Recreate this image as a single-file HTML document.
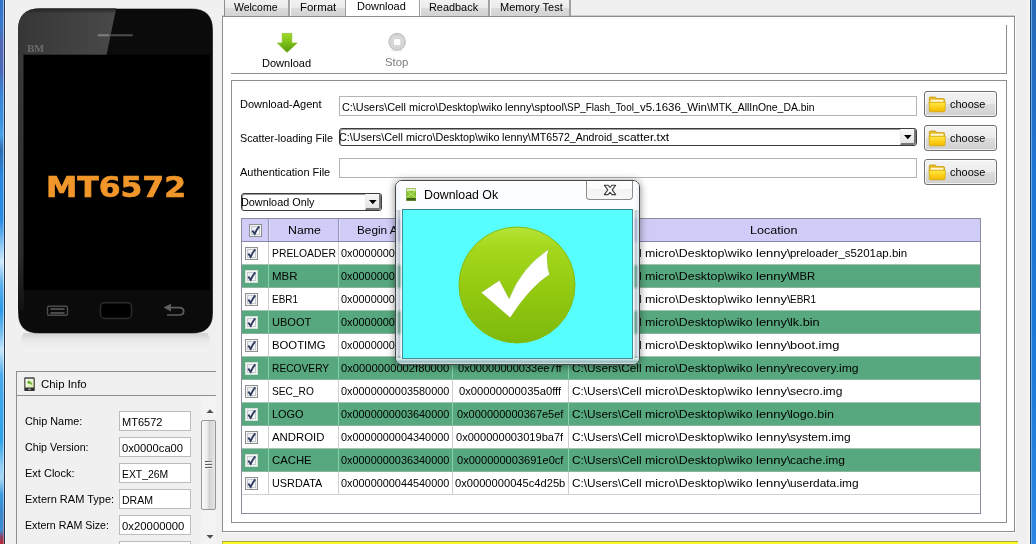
<!DOCTYPE html><html><head><meta charset="utf-8"><title>Smart Phone Flash Tool</title><style>
*{box-sizing:border-box;margin:0;padding:0}
html,body{width:1036px;height:544px;overflow:hidden;background:#f0f0f0}
body{position:relative;will-change:transform;font-family:"Liberation Sans",sans-serif;font-size:11px;color:#000}
.a{position:absolute}
.t{position:absolute;white-space:pre;line-height:1;transform-origin:0 0;display:block}
.bx{position:absolute;border:1px solid #8e8e8e;background:#fff}
.inp{position:absolute;border:1px solid #b4b4b4;background:#fff}
.btn{position:absolute;border:1px solid #707070;border-radius:3px;background:linear-gradient(#f4f4f4 0%,#ebebeb 48%,#dddddd 52%,#cfcfcf 100%);box-shadow:inset 0 0 0 1px rgba(255,255,255,.7)}
.tab{position:absolute;top:-2px;height:18px;border:1px solid #8e8e8e;border-right:2px solid #a2a2a2;border-left-color:#fafafa;border-bottom:none;background:linear-gradient(#f2f2f2 0%,#ebebeb 50%,#dcdcdc 55%,#d2d2d2 100%)}
.row{position:absolute;left:242px;width:738px;height:23px;background:#fff;border-bottom:1px solid #a4c4b4}
.row.l{border-bottom-color:#d2d2d2}
.row.g{background:#57a87e;border-bottom-color:#8ab49e}
.row i{position:absolute;top:0;width:1px;height:22px;background:#d0ccd0}
.row.g i{background:#86d0aa}
.cb.g{border-color:#cfe0d6}
.cb{position:absolute;width:13px;height:13px;border:1px solid #8e8f8f;background:linear-gradient(135deg,#dfe2e6 0%,#f4f5f7 50%,#ffffff 100%);box-shadow:inset 0 0 0 1px #f4f4f4, inset 0 0 0 2px #c4c8cf}
</style></head><body>
<div class="a" style="left:0;top:0;width:3px;height:544px;background:linear-gradient(#3274c8 0px,#3a78cc 25px,#5566b4 45px,#4a6ab8 70px,#3a84d8 95px,#3c90e0 120px,#4aa4e8 134px,#2e6cb0 150px,#2a86de 175px,#2a8ce2 220px,#8cc8f4 245px,#d0e8fa 262px,#58aeee 285px,#2a9ae6 310px,#7cc4f2 335px,#c8e6fa 350px,#4aaaec 375px,#2ea2e8 440px,#8ccdf4 465px,#a8d8f6 478px,#3a9ade 495px,#3a86c8 515px,#3a90d8 530px,#8a4060 537px,#c02838 544px)"></div>
<div class="a" style="left:3px;top:0;width:1px;height:544px;background:linear-gradient(#9cc0ee 0px,#a8b4e4 60px,#8cc4f2 140px,#7cc0f4 230px,#e4f2fc 262px,#8cccf6 300px,#dcf0fc 350px,#86ccf4 400px,#bfe2f8 470px,#7ab4e4 510px,#c86a78 544px)"></div><div class="a" style="left:4px;top:0;width:1px;height:544px;background:#23354f"></div><div class="a" style="left:5px;top:0;width:1px;height:544px;background:#fbfdff"></div>
<div class="a" style="left:1028px;top:0;width:2px;height:544px;background:linear-gradient(90deg,#f4f4f6,#f8fcff)"></div>
<div class="a" style="left:1030px;top:0;width:1px;height:544px;background:#1d3f6e"></div>
<div class="a" style="left:1031px;top:0;width:5px;height:544px;background:linear-gradient(#2768b4,#1e74d2 30%,#1c78d6 60%,#2a86e2)"></div><div class="a" style="left:1031px;top:0;width:1px;height:544px;background:#6aaef2"></div>
<svg class="a" style="left:0;top:0" width="222" height="370" viewBox="0 0 222 370">
<defs>
<linearGradient id="gl" x1="0" y1="0" x2="1" y2="0"><stop offset="0" stop-color="#363636"/><stop offset="1" stop-color="#494949"/></linearGradient>
<linearGradient id="gv" x1="0" y1="0" x2="0" y2="1"><stop offset="0" stop-color="#1c1c1c" stop-opacity=".9"/><stop offset=".12" stop-color="#1c1c1c" stop-opacity="0"/></linearGradient>
<linearGradient id="rim" x1="0" y1="0" x2="0" y2="1"><stop offset="0" stop-color="#3a3a3a"/><stop offset=".8" stop-color="#2c2c2c"/><stop offset="1" stop-color="#111"/></linearGradient>
<linearGradient id="sh" x1="0" y1="0" x2="0" y2="1"><stop offset="0" stop-color="#c8c8c8"/><stop offset=".35" stop-color="#e6e6e6"/><stop offset="1" stop-color="#f3f3f3"/></linearGradient>
<clipPath id="pc"><path d="M18 30 Q18 8.500 40 8.500 H191 Q213 8.500 213 30 V313 Q213 333.500 192 333.500 H39 Q18 333.500 18 313 Z"/></clipPath>
</defs>
<path d="M24 333 H207 Q213 340 205 352 H26 Q18 340 24 333Z" fill="url(#sh)" opacity=".8"/>
<path d="M18 30 Q18 8.500 40 8.500 H191 Q213 8.500 213 30 V313 Q213 333.500 192 333.500 H39 Q18 333.500 18 313 Z" fill="#0b0b0b" stroke="#fafafa" stroke-opacity=".35" stroke-width="1"/>
<g clip-path="url(#pc)">
<rect x="18" y="40" width="6" height="270" fill="url(#rim)"/>
<path d="M18 8 H116.300 L106.500 55 H18 Z" fill="url(#gl)"/>
<path d="M18 8 H116.300 L106.500 55 H18 Z" fill="url(#gv)"/>
<rect x="23.500" y="54.700" width="186.500" height="235.500" fill="#000"/>
</g>
<rect x="97.500" y="34.300" width="35.500" height="2" rx="1" fill="#4c4c4c"/>
<rect x="97.500" y="34.300" width="12" height="2" rx="1" fill="#808080"/>
<text x="27.300" y="52" font-family="Liberation Serif, serif" font-weight="700" font-size="10.5" fill="#6c6c6c">BM</text>
<g fill="none" stroke="#4c4c4c" stroke-width="1.400">
<rect x="47.500" y="306.300" width="20" height="9" rx="1.500"/>
<path d="M50.500 309 H64.500 M50.500 313 H64.500" stroke="#8a8a8a" stroke-width="1.100"/>
<rect x="100.500" y="302.800" width="31" height="15.700" rx="4" stroke="#2e2e2e" fill="#000"/>
<path d="M167 315 H179 Q183.700 315 183.700 311.300 Q183.700 307.600 179 307.600 H171" stroke="#5e5e5e" stroke-width="1.700"/>
</g>
<path d="M163.500 307.600 L171 303.800 V311.400 Z" fill="#5e5e5e"/>
</svg>
<span id="t0" class="t" style="left:45.60px;top:173.89px;font-size:28.5px;color:#f0962a;font-weight:bold;font-family:'DejaVu Sans','Liberation Sans',sans-serif;transform:scaleX(1.1013);-webkit-text-stroke:0.7px #f0962a;">MT6572</span>
<div class="a" style="left:16px;top:371px;width:200px;height:1px;background:#8e8e8e"></div>
<div class="a" style="left:16px;top:371px;width:1px;height:173px;background:#8e8e8e"></div>
<div class="a" style="left:16px;top:395px;width:200px;height:1px;background:#8e8e8e"></div>
<svg class="a" style="left:23.500px;top:376.500px" width="11" height="14.500" viewBox="0 0 11 14.500"><defs><linearGradient id="gs" x1="0" y1="0" x2="1" y2="1"><stop offset="0" stop-color="#ffffff"/><stop offset="1" stop-color="#d4eea0"/></linearGradient></defs><rect x=".4" y=".4" width="10.200" height="13.700" rx="1.200" fill="#303030" stroke="#4a4a4a" stroke-width=".5"/><rect x="1.400" y="1.700" width="8.200" height="8.800" fill="url(#gs)"/><path d="M3 5.200 L5.300 3 V4.400 Q8.300 4.500 8 8.600 Q7.300 6.300 5.300 6.200 V7.500Z" fill="#62a41c"/><rect x="4.300" y="11.700" width="2.400" height="1" rx=".4" fill="#e4e4e4"/></svg>
<span id="t1" class="t" style="left:40.60px;top:378.69px;font-size:11px;color:#000;font-weight:normal;font-family:'Liberation Sans',sans-serif;transform:scaleX(1.0379);">Chip Info</span>
<span id="t2" class="t" style="left:24.50px;top:415.99px;font-size:11px;color:#000;font-weight:normal;font-family:'Liberation Sans',sans-serif;transform:scaleX(0.9849);">Chip Name:</span>
<div class="inp" style="left:119px;top:411px;width:72px;height:20px;border-color:#bcbcbc"></div>
<span id="t3" class="t" style="left:121.50px;top:416.99px;font-size:11px;color:#000;font-weight:normal;font-family:'Liberation Sans',sans-serif;transform:scaleX(1.0035);">MT6572</span>
<span id="t4" class="t" style="left:24.50px;top:441.99px;font-size:11px;color:#000;font-weight:normal;font-family:'Liberation Sans',sans-serif;transform:scaleX(0.9719);">Chip Version:</span>
<div class="inp" style="left:119px;top:437px;width:72px;height:20px;border-color:#bcbcbc"></div>
<span id="t5" class="t" style="left:121.50px;top:442.99px;font-size:11px;color:#000;font-weight:normal;font-family:'Liberation Sans',sans-serif;transform:scaleX(1.0191);">0x0000ca00</span>
<span id="t6" class="t" style="left:24.50px;top:467.99px;font-size:11px;color:#000;font-weight:normal;font-family:'Liberation Sans',sans-serif;transform:scaleX(0.9997);">Ext Clock:</span>
<div class="inp" style="left:119px;top:463px;width:72px;height:20px;border-color:#bcbcbc"></div>
<span id="t7" class="t" style="left:121.50px;top:468.99px;font-size:11px;color:#000;font-weight:normal;font-family:'Liberation Sans',sans-serif;transform:scaleX(0.9423);">EXT_26M</span>
<span id="t8" class="t" style="left:24.50px;top:493.99px;font-size:11px;color:#000;font-weight:normal;font-family:'Liberation Sans',sans-serif;transform:scaleX(1.0004);">Extern RAM Type:</span>
<div class="inp" style="left:119px;top:489px;width:72px;height:20px;border-color:#bcbcbc"></div>
<span id="t9" class="t" style="left:121.50px;top:494.99px;font-size:11px;color:#000;font-weight:normal;font-family:'Liberation Sans',sans-serif;transform:scaleX(0.9571);">DRAM</span>
<span id="t10" class="t" style="left:24.50px;top:519.99px;font-size:11px;color:#000;font-weight:normal;font-family:'Liberation Sans',sans-serif;transform:scaleX(0.9676);">Extern RAM Size:</span>
<div class="inp" style="left:119px;top:515px;width:72px;height:20px;border-color:#bcbcbc"></div>
<span id="t11" class="t" style="left:121.50px;top:520.99px;font-size:11px;color:#000;font-weight:normal;font-family:'Liberation Sans',sans-serif;transform:scaleX(1.0303);">0x20000000</span>
<div class="inp" style="left:119px;top:541px;width:72px;height:20px;border-color:#bcbcbc"></div>
<div class="a" style="left:201px;top:396px;width:15px;height:148px;background:#f3f3f3"></div>
<div class="a" style="left:201px;top:420px;width:15px;height:90px;border:1px solid #979797;border-radius:2px;background:linear-gradient(90deg,#fafafa 0%,#ececec 40%,#d2d2d2 55%,#dcdcdc 80%,#e6e6e6 100%)"></div>
<div class="a" style="left:205px;top:461px;width:7px;height:1px;background:linear-gradient(90deg,#3c3c3c,#8a8a8a);box-shadow:0 3px 0 #5c5c5c,0 6px 0 #5c5c5c,0 1px 0 #f6f6f6,0 4px 0 #f6f6f6,0 7px 0 #f6f6f6"></div>
<svg class="a" style="left:204.500px;top:408px" width="10" height="6"><path d="M1.500 5 L5 1.300 L8.500 5Z" fill="#505050"/></svg>
<svg class="a" style="left:204.500px;top:534px" width="10" height="6"><path d="M1.500 1 L5 4.700 L8.500 1Z" fill="#505050"/></svg>
<div class="a" style="left:222px;top:15px;width:793px;height:1px;background:#cdcdcd"></div><div class="bx" style="left:222px;top:16px;width:793px;height:516px;box-shadow:1px 1px 0 #fcfcfc"></div>
<div class="tab" style="left:224px;width:66px;border-left-color:#8e8e8e"></div>
<span id="t12" class="t" style="left:233.80px;top:1.59px;font-size:11px;color:#000;font-weight:normal;font-family:'Liberation Sans',sans-serif;transform:scaleX(0.9528);">Welcome</span>
<div class="tab" style="left:290px;width:55px;border-right:none"></div>
<span id="t13" class="t" style="left:299.50px;top:1.59px;font-size:11px;color:#000;font-weight:normal;font-family:'Liberation Sans',sans-serif;transform:scaleX(1.0418);">Format</span>
<div class="tab" style="left:345px;width:75px;top:-4px;height:20px;background:#fff;border-left-color:#9c9c9c;border-right:1px solid #9c9c9c"></div>
<span id="t14" class="t" style="left:357.40px;top:0.59px;font-size:11px;color:#000;font-weight:normal;font-family:'Liberation Sans',sans-serif;transform:scaleX(0.9975);">Download</span>
<div class="tab" style="left:420px;width:70px"></div>
<span id="t15" class="t" style="left:428.60px;top:1.59px;font-size:11px;color:#000;font-weight:normal;font-family:'Liberation Sans',sans-serif;transform:scaleX(0.9910);">Readback</span>
<div class="tab" style="left:490px;width:81px"></div>
<span id="t16" class="t" style="left:499.60px;top:1.59px;font-size:11px;color:#000;font-weight:normal;font-family:'Liberation Sans',sans-serif;transform:scaleX(0.9990);">Memory Test</span>
<div class="bx" style="left:231px;top:25px;width:776px;height:49px;border-color:#8e8e8e;border-left:none;border-top:none"></div>
<div class="bx" style="left:231px;top:80px;width:776px;height:443px"></div>
<svg class="a" style="left:274px;top:30px" width="26" height="25" viewBox="0 0 26 25"><defs><linearGradient id="ga" x1="0" y1="0" x2="0" y2="1"><stop offset="0" stop-color="#9cd828"/><stop offset=".5" stop-color="#7cc018"/><stop offset="1" stop-color="#56960e"/></linearGradient></defs><path d="M8.200 3.400 H17.800 V13 H23.200 L13 22.400 L3.400 13 H8.200Z" fill="url(#ga)" stroke="#86bc24" stroke-width=".7"/></svg>
<span id="t17" class="t" style="left:261.50px;top:58.09px;font-size:11px;color:#000;font-weight:normal;font-family:'Liberation Sans',sans-serif;transform:scaleX(1.0036);">Download</span>
<svg class="a" style="left:386px;top:31px" width="22" height="22" viewBox="0 0 22 22"><ellipse cx="11.1" cy="19.6" rx="6" ry="1" fill="#e9e9e9"/><circle cx="11.1" cy="10.7" r="8.200" fill="#dcdcdc" stroke="#c0c0c0" stroke-width="1.300"/><circle cx="11.1" cy="10.7" r="6.300" fill="none" stroke="#cfcfcf" stroke-width="1"/><rect x="7.400" y="7.700" width="7.400" height="6.900" rx=".8" fill="#fdfdfd" stroke="#c8c8c8" stroke-width=".7"/></svg>
<span id="t18" class="t" style="left:384.90px;top:57.09px;font-size:11px;color:#7c7c7c;font-weight:normal;font-family:'Liberation Sans',sans-serif;transform:scaleX(1.0291);">Stop</span>
<span id="t19" class="t" style="left:239.70px;top:98.89px;font-size:11px;color:#000;font-weight:normal;font-family:'Liberation Sans',sans-serif;transform:scaleX(1.0019);">Download-Agent</span>
<span id="t20" class="t" style="left:239.80px;top:132.79px;font-size:11px;color:#000;font-weight:normal;font-family:'Liberation Sans',sans-serif;transform:scaleX(0.9812);">Scatter-loading File</span>
<span id="t21" class="t" style="left:240.20px;top:166.89px;font-size:11px;color:#000;font-weight:normal;font-family:'Liberation Sans',sans-serif;transform:scaleX(0.9967);">Authentication File</span>
<div class="inp" style="left:339px;top:96px;width:578px;height:20px"></div>
<span id="t22" class="t" style="left:341.90px;top:101.79px;font-size:11px;color:#000;font-weight:normal;font-family:'Liberation Sans',sans-serif;transform:scaleX(0.9861);">C:\Users\Cell </span><span id="t23" class="t" style="left:408.80px;top:101.79px;font-size:11px;color:#000;font-weight:normal;font-family:'Liberation Sans',sans-serif;transform:scaleX(0.9815);">micro\Desktop\wiko </span><span id="t24" class="t" style="left:505.40px;top:101.79px;font-size:11px;color:#000;font-weight:normal;font-family:'Liberation Sans',sans-serif;transform:scaleX(1.0038);">lenny\sptool\</span><span id="t25" class="t" style="left:567.40px;top:101.79px;font-size:11px;color:#000;font-weight:normal;font-family:'Liberation Sans',sans-serif;transform:scaleX(0.9038);">SP_Flash_Tool_</span><span id="t26" class="t" style="left:639.80px;top:101.79px;font-size:11px;color:#000;font-weight:normal;font-family:'Liberation Sans',sans-serif;transform:scaleX(1.0436);">v5.1636_Win\</span><span id="t27" class="t" style="left:710.00px;top:101.79px;font-size:11px;color:#000;font-weight:normal;font-family:'Liberation Sans',sans-serif;transform:scaleX(0.9451);">MTK_AllInOne_DA.bin</span>
<div class="inp" style="left:339px;top:128px;width:578px;height:18px;border-color:#3c3c3c;border-radius:3px;box-shadow:inset 1px 1px 0 #9a9a9a"></div>
<span id="t28" class="t" style="left:338.90px;top:132.29px;font-size:11px;color:#000;font-weight:normal;font-family:'Liberation Sans',sans-serif;transform:scaleX(0.9861);">C:\Users\Cell </span><span id="t29" class="t" style="left:405.80px;top:132.29px;font-size:11px;color:#000;font-weight:normal;font-family:'Liberation Sans',sans-serif;transform:scaleX(0.9815);">micro\Desktop\wiko </span><span id="t30" class="t" style="left:502.40px;top:132.29px;font-size:11px;color:#000;font-weight:normal;font-family:'Liberation Sans',sans-serif;transform:scaleX(0.9809);">lenny\</span><span id="t31" class="t" style="left:531.20px;top:132.29px;font-size:11px;color:#000;font-weight:normal;font-family:'Liberation Sans',sans-serif;transform:scaleX(0.9612);">MT6572_Android_</span><span id="t32" class="t" style="left:618.20px;top:132.29px;font-size:11px;color:#000;font-weight:normal;font-family:'Liberation Sans',sans-serif;transform:scaleX(1.0876);">scatter.txt</span>
<div class="a" style="left:900px;top:129px;width:16px;height:16px;background:linear-gradient(#f8f8f8,#e4e4e4);border-right:2px solid #767676;border-bottom:2px solid #767676;border-left:1px solid #e8e8e8;border-radius:0 2px 3px 0"></div><svg class="a" style="left:903.500px;top:135px" width="8" height="5"><path d="M0 0 H7.600 L3.800 4.300Z" fill="#000"/></svg>
<div class="inp" style="left:339px;top:158px;width:578px;height:20px"></div>
<div class="btn" style="left:924px;top:91px;width:73px;height:26px"></div>
<svg class="a" style="left:928px;top:96px" width="19" height="17" viewBox="0 0 19 17"><defs><linearGradient id="gf0" x1="0" y1="0" x2="0" y2="1"><stop offset="0" stop-color="#ffe84a"/><stop offset=".5" stop-color="#fcd21c"/><stop offset="1" stop-color="#f2b600"/></linearGradient></defs><path d="M1.300 2 Q1.300 1 2.300 1 H7.400 L8.800 2.600 H15.600 Q16.600 2.600 16.600 3.600 V8 H1.300Z" fill="#e8b820" stroke="#c39a12" stroke-width=".8"/><rect x="2.600" y="3.700" width="12.800" height="2.400" fill="#fff4cc"/><path d="M1.100 6.300 H17.500 L17 14.800 Q16.900 15.800 15.900 15.800 H2.300 Q1.300 15.800 1.300 14.800Z" fill="url(#gf0)" stroke="#d0a406" stroke-width=".7"/></svg>
<span id="t33" class="t" style="left:950.00px;top:99.39px;font-size:11px;color:#000;font-weight:normal;font-family:'Liberation Sans',sans-serif;transform:scaleX(0.9948);">choose</span>
<div class="btn" style="left:924px;top:125px;width:73px;height:26px"></div>
<svg class="a" style="left:928px;top:130px" width="19" height="17" viewBox="0 0 19 17"><defs><linearGradient id="gf1" x1="0" y1="0" x2="0" y2="1"><stop offset="0" stop-color="#ffe84a"/><stop offset=".5" stop-color="#fcd21c"/><stop offset="1" stop-color="#f2b600"/></linearGradient></defs><path d="M1.300 2 Q1.300 1 2.300 1 H7.400 L8.800 2.600 H15.600 Q16.600 2.600 16.600 3.600 V8 H1.300Z" fill="#e8b820" stroke="#c39a12" stroke-width=".8"/><rect x="2.600" y="3.700" width="12.800" height="2.400" fill="#fff4cc"/><path d="M1.100 6.300 H17.500 L17 14.800 Q16.900 15.800 15.900 15.800 H2.300 Q1.300 15.800 1.300 14.800Z" fill="url(#gf1)" stroke="#d0a406" stroke-width=".7"/></svg>
<span id="t34" class="t" style="left:950.00px;top:133.39px;font-size:11px;color:#000;font-weight:normal;font-family:'Liberation Sans',sans-serif;transform:scaleX(0.9948);">choose</span>
<div class="btn" style="left:924px;top:159px;width:73px;height:26px"></div>
<svg class="a" style="left:928px;top:164px" width="19" height="17" viewBox="0 0 19 17"><defs><linearGradient id="gf2" x1="0" y1="0" x2="0" y2="1"><stop offset="0" stop-color="#ffe84a"/><stop offset=".5" stop-color="#fcd21c"/><stop offset="1" stop-color="#f2b600"/></linearGradient></defs><path d="M1.300 2 Q1.300 1 2.300 1 H7.400 L8.800 2.600 H15.600 Q16.600 2.600 16.600 3.600 V8 H1.300Z" fill="#e8b820" stroke="#c39a12" stroke-width=".8"/><rect x="2.600" y="3.700" width="12.800" height="2.400" fill="#fff4cc"/><path d="M1.100 6.300 H17.500 L17 14.800 Q16.900 15.800 15.900 15.800 H2.300 Q1.300 15.800 1.300 14.800Z" fill="url(#gf2)" stroke="#d0a406" stroke-width=".7"/></svg>
<span id="t35" class="t" style="left:950.00px;top:167.39px;font-size:11px;color:#000;font-weight:normal;font-family:'Liberation Sans',sans-serif;transform:scaleX(0.9948);">choose</span>
<div class="inp" style="left:241px;top:193px;width:141px;height:18px;border-color:#3c3c3c;border-radius:3px;box-shadow:inset 1px 1px 0 #9a9a9a"></div>
<span id="t36" class="t" style="left:240.80px;top:196.89px;font-size:11px;color:#000;font-weight:normal;font-family:'Liberation Sans',sans-serif;transform:scaleX(0.9853);">Download Only</span>
<div class="a" style="left:365px;top:194px;width:16px;height:16px;background:linear-gradient(#f8f8f8,#e4e4e4);border-right:2px solid #767676;border-bottom:2px solid #767676;border-left:1px solid #e8e8e8;border-radius:0 2px 3px 0"></div><svg class="a" style="left:368.500px;top:200px" width="8" height="5"><path d="M0 0 H7.600 L3.800 4.300Z" fill="#000"/></svg>
<div class="bx" style="left:241px;top:218px;width:740px;height:296px;border-color:#8c8c9c"></div>
<div class="a" style="left:242px;top:219px;width:738px;height:23px;background:#cfcdf7;border-bottom:1px solid #8686a6"></div>
<div class="a" style="left:268px;top:219px;width:1px;height:22px;background:#9494b4"></div><div class="a" style="left:269px;top:219px;width:1px;height:22px;background:#dedefb"></div>
<div class="a" style="left:338px;top:219px;width:1px;height:22px;background:#9494b4"></div><div class="a" style="left:339px;top:219px;width:1px;height:22px;background:#dedefb"></div>
<div class="a" style="left:452px;top:219px;width:1px;height:22px;background:#9494b4"></div><div class="a" style="left:453px;top:219px;width:1px;height:22px;background:#dedefb"></div>
<div class="a" style="left:568px;top:219px;width:1px;height:22px;background:#9494b4"></div><div class="a" style="left:569px;top:219px;width:1px;height:22px;background:#dedefb"></div>
<div class="cb" style="left:249px;top:224px"></div><svg class="a" style="left:249px;top:224px" width="13" height="13" viewBox="0 0 13 13"><path d="M3.300 6.600 L5.700 9.800 Q7.600 5.200 10.300 2.300" fill="none" stroke="#2f3a5e" stroke-width="1.900" stroke-linejoin="miter"/></svg>
<span id="t37" class="t" style="left:287.80px;top:225.07px;font-size:11.5px;color:#000;font-weight:normal;font-family:'Liberation Sans',sans-serif;transform:scaleX(1.0688);">Name</span>
<span id="t38" class="t" style="left:357.00px;top:225.07px;font-size:11.5px;color:#000;font-weight:normal;font-family:'Liberation Sans',sans-serif;transform:scaleX(1.0246);">Begin Address</span>
<span id="t39" class="t" style="left:479.00px;top:225.07px;font-size:11.5px;color:#000;font-weight:normal;font-family:'Liberation Sans',sans-serif;transform:scaleX(0.9506);">End Address</span>
<span id="t40" class="t" style="left:750.20px;top:225.17px;font-size:11.5px;color:#000;font-weight:normal;font-family:'Liberation Sans',sans-serif;transform:scaleX(1.0900);">Location</span>
<div class="row" style="top:242px"><i style="left:26px"></i><i style="left:96px"></i><i style="left:210px"></i><i style="left:326px"></i></div>
<div class="cb" style="left:245px;top:247px"></div><svg class="a" style="left:245px;top:247px" width="13" height="13" viewBox="0 0 13 13"><path d="M3.300 6.600 L5.700 9.800 Q7.600 5.200 10.300 2.300" fill="none" stroke="#2f3a5e" stroke-width="1.900" stroke-linejoin="miter"/></svg>
<span id="t41" class="t" style="left:271.80px;top:247.77px;font-size:11.5px;color:#000;font-weight:normal;font-family:'Liberation Sans',sans-serif;transform:scaleX(0.9008);">PRELOADER</span>
<span id="t42" class="t" style="left:341.20px;top:247.77px;font-size:11.5px;color:#000;font-weight:normal;font-family:'Liberation Sans',sans-serif;transform:scaleX(0.9460);">0x0000000000000000</span>
<span id="t43" class="t" style="left:458.20px;top:247.77px;font-size:11.5px;color:#000;font-weight:normal;font-family:'Liberation Sans',sans-serif;transform:scaleX(1.0360);">0x000000000001ffff</span>
<span id="t44" class="t" style="left:571.70px;top:247.77px;font-size:11.5px;color:#000;font-weight:normal;font-family:'Liberation Sans',sans-serif;transform:scaleX(1.0263);">C:\Users\Cell </span><span id="t45" class="t" style="left:644.50px;top:247.77px;font-size:11.5px;color:#000;font-weight:normal;font-family:'Liberation Sans',sans-serif;transform:scaleX(1.0788);">micro\Desktop\wiko </span><span id="t46" class="t" style="left:755.50px;top:247.77px;font-size:11.5px;color:#000;font-weight:normal;font-family:'Liberation Sans',sans-serif;transform:scaleX(1.1308);">lenny\</span><span id="t47" class="t" style="left:790.20px;top:247.77px;font-size:11.5px;color:#000;font-weight:normal;font-family:'Liberation Sans',sans-serif;transform:scaleX(0.9961);">preloader_s5201ap.bin</span>
<div class="row g" style="top:265px"><i style="left:26px"></i><i style="left:96px"></i><i style="left:210px"></i><i style="left:326px"></i></div>
<div class="cb g" style="left:245px;top:270px"></div><svg class="a" style="left:245px;top:270px" width="13" height="13" viewBox="0 0 13 13"><path d="M3.300 6.600 L5.700 9.800 Q7.600 5.200 10.300 2.300" fill="none" stroke="#2f3a5e" stroke-width="1.900" stroke-linejoin="miter"/></svg>
<span id="t48" class="t" style="left:271.80px;top:270.77px;font-size:11.5px;color:#000;font-weight:normal;font-family:'Liberation Sans',sans-serif;transform:scaleX(0.9976);">MBR</span>
<span id="t49" class="t" style="left:341.20px;top:270.77px;font-size:11.5px;color:#000;font-weight:normal;font-family:'Liberation Sans',sans-serif;transform:scaleX(0.9460);">0x0000000001400000</span>
<span id="t50" class="t" style="left:458.20px;top:270.77px;font-size:11.5px;color:#000;font-weight:normal;font-family:'Liberation Sans',sans-serif;transform:scaleX(0.9706);">0x00000000014001ff</span>
<span id="t51" class="t" style="left:571.70px;top:270.77px;font-size:11.5px;color:#000;font-weight:normal;font-family:'Liberation Sans',sans-serif;transform:scaleX(1.0263);">C:\Users\Cell </span><span id="t52" class="t" style="left:644.50px;top:270.77px;font-size:11.5px;color:#000;font-weight:normal;font-family:'Liberation Sans',sans-serif;transform:scaleX(1.0788);">micro\Desktop\wiko </span><span id="t53" class="t" style="left:755.50px;top:270.77px;font-size:11.5px;color:#000;font-weight:normal;font-family:'Liberation Sans',sans-serif;transform:scaleX(1.1308);">lenny\</span><span id="t54" class="t" style="left:790.20px;top:270.77px;font-size:11.5px;color:#000;font-weight:normal;font-family:'Liberation Sans',sans-serif;transform:scaleX(0.9897);">MBR</span>
<div class="row" style="top:288px"><i style="left:26px"></i><i style="left:96px"></i><i style="left:210px"></i><i style="left:326px"></i></div>
<div class="cb" style="left:245px;top:293px"></div><svg class="a" style="left:245px;top:293px" width="13" height="13" viewBox="0 0 13 13"><path d="M3.300 6.600 L5.700 9.800 Q7.600 5.200 10.300 2.300" fill="none" stroke="#2f3a5e" stroke-width="1.900" stroke-linejoin="miter"/></svg>
<span id="t55" class="t" style="left:271.80px;top:293.77px;font-size:11.5px;color:#000;font-weight:normal;font-family:'Liberation Sans',sans-serif;transform:scaleX(0.8653);">EBR1</span>
<span id="t56" class="t" style="left:341.20px;top:293.77px;font-size:11.5px;color:#000;font-weight:normal;font-family:'Liberation Sans',sans-serif;transform:scaleX(0.9460);">0x0000000001480000</span>
<span id="t57" class="t" style="left:458.20px;top:293.77px;font-size:11.5px;color:#000;font-weight:normal;font-family:'Liberation Sans',sans-serif;transform:scaleX(0.9706);">0x00000000014801ff</span>
<span id="t58" class="t" style="left:571.70px;top:293.77px;font-size:11.5px;color:#000;font-weight:normal;font-family:'Liberation Sans',sans-serif;transform:scaleX(1.0263);">C:\Users\Cell </span><span id="t59" class="t" style="left:644.50px;top:293.77px;font-size:11.5px;color:#000;font-weight:normal;font-family:'Liberation Sans',sans-serif;transform:scaleX(1.0788);">micro\Desktop\wiko </span><span id="t60" class="t" style="left:755.50px;top:293.77px;font-size:11.5px;color:#000;font-weight:normal;font-family:'Liberation Sans',sans-serif;transform:scaleX(1.1308);">lenny\</span><span id="t61" class="t" style="left:790.20px;top:293.77px;font-size:11.5px;color:#000;font-weight:normal;font-family:'Liberation Sans',sans-serif;transform:scaleX(0.8686);">EBR1</span>
<div class="row g" style="top:311px"><i style="left:26px"></i><i style="left:96px"></i><i style="left:210px"></i><i style="left:326px"></i></div>
<div class="cb g" style="left:245px;top:316px"></div><svg class="a" style="left:245px;top:316px" width="13" height="13" viewBox="0 0 13 13"><path d="M3.300 6.600 L5.700 9.800 Q7.600 5.200 10.300 2.300" fill="none" stroke="#2f3a5e" stroke-width="1.900" stroke-linejoin="miter"/></svg>
<span id="t62" class="t" style="left:271.80px;top:316.77px;font-size:11.5px;color:#000;font-weight:normal;font-family:'Liberation Sans',sans-serif;transform:scaleX(0.9587);">UBOOT</span>
<span id="t63" class="t" style="left:341.20px;top:316.77px;font-size:11.5px;color:#000;font-weight:normal;font-family:'Liberation Sans',sans-serif;transform:scaleX(0.9460);">0x0000000002a00000</span>
<span id="t64" class="t" style="left:458.20px;top:316.77px;font-size:11.5px;color:#000;font-weight:normal;font-family:'Liberation Sans',sans-serif;transform:scaleX(1.0360);">0x0000000002a3ffff</span>
<span id="t65" class="t" style="left:571.70px;top:316.77px;font-size:11.5px;color:#000;font-weight:normal;font-family:'Liberation Sans',sans-serif;transform:scaleX(1.0263);">C:\Users\Cell </span><span id="t66" class="t" style="left:644.50px;top:316.77px;font-size:11.5px;color:#000;font-weight:normal;font-family:'Liberation Sans',sans-serif;transform:scaleX(1.0788);">micro\Desktop\wiko </span><span id="t67" class="t" style="left:755.50px;top:316.77px;font-size:11.5px;color:#000;font-weight:normal;font-family:'Liberation Sans',sans-serif;transform:scaleX(1.1308);">lenny\</span><span id="t68" class="t" style="left:790.20px;top:316.77px;font-size:11.5px;color:#000;font-weight:normal;font-family:'Liberation Sans',sans-serif;transform:scaleX(1.1058);">lk.bin</span>
<div class="row" style="top:334px"><i style="left:26px"></i><i style="left:96px"></i><i style="left:210px"></i><i style="left:326px"></i></div>
<div class="cb" style="left:245px;top:339px"></div><svg class="a" style="left:245px;top:339px" width="13" height="13" viewBox="0 0 13 13"><path d="M3.300 6.600 L5.700 9.800 Q7.600 5.200 10.300 2.300" fill="none" stroke="#2f3a5e" stroke-width="1.900" stroke-linejoin="miter"/></svg>
<span id="t69" class="t" style="left:271.80px;top:339.77px;font-size:11.5px;color:#000;font-weight:normal;font-family:'Liberation Sans',sans-serif;transform:scaleX(0.9850);">BOOTIMG</span>
<span id="t70" class="t" style="left:341.20px;top:339.77px;font-size:11.5px;color:#000;font-weight:normal;font-family:'Liberation Sans',sans-serif;transform:scaleX(0.9460);">0x0000000002b00000</span>
<span id="t71" class="t" style="left:458.20px;top:339.77px;font-size:11.5px;color:#000;font-weight:normal;font-family:'Liberation Sans',sans-serif;transform:scaleX(1.0721);">0x00000000030fffff</span>
<span id="t72" class="t" style="left:571.70px;top:339.77px;font-size:11.5px;color:#000;font-weight:normal;font-family:'Liberation Sans',sans-serif;transform:scaleX(1.0263);">C:\Users\Cell </span><span id="t73" class="t" style="left:644.50px;top:339.77px;font-size:11.5px;color:#000;font-weight:normal;font-family:'Liberation Sans',sans-serif;transform:scaleX(1.0788);">micro\Desktop\wiko </span><span id="t74" class="t" style="left:755.50px;top:339.77px;font-size:11.5px;color:#000;font-weight:normal;font-family:'Liberation Sans',sans-serif;transform:scaleX(1.1308);">lenny\</span><span id="t75" class="t" style="left:790.20px;top:339.77px;font-size:11.5px;color:#000;font-weight:normal;font-family:'Liberation Sans',sans-serif;transform:scaleX(1.1177);">boot.img</span>
<div class="row g" style="top:357px"><i style="left:26px"></i><i style="left:96px"></i><i style="left:210px"></i><i style="left:326px"></i></div>
<div class="cb g" style="left:245px;top:362px"></div><svg class="a" style="left:245px;top:362px" width="13" height="13" viewBox="0 0 13 13"><path d="M3.300 6.600 L5.700 9.800 Q7.600 5.200 10.300 2.300" fill="none" stroke="#2f3a5e" stroke-width="1.900" stroke-linejoin="miter"/></svg>
<span id="t76" class="t" style="left:271.80px;top:362.77px;font-size:11.5px;color:#000;font-weight:normal;font-family:'Liberation Sans',sans-serif;transform:scaleX(0.8890);">RECOVERY</span>
<span id="t77" class="t" style="left:341.20px;top:362.77px;font-size:11.5px;color:#000;font-weight:normal;font-family:'Liberation Sans',sans-serif;transform:scaleX(0.9732);">0x0000000002f80000</span>
<span id="t78" class="t" style="left:458.00px;top:362.77px;font-size:11.5px;color:#000;font-weight:normal;font-family:'Liberation Sans',sans-serif;transform:scaleX(0.9604);">0x00000000033ee7ff</span>
<span id="t79" class="t" style="left:571.70px;top:362.77px;font-size:11.5px;color:#000;font-weight:normal;font-family:'Liberation Sans',sans-serif;transform:scaleX(1.0263);">C:\Users\Cell </span><span id="t80" class="t" style="left:644.50px;top:362.77px;font-size:11.5px;color:#000;font-weight:normal;font-family:'Liberation Sans',sans-serif;transform:scaleX(1.0788);">micro\Desktop\wiko </span><span id="t81" class="t" style="left:755.50px;top:362.77px;font-size:11.5px;color:#000;font-weight:normal;font-family:'Liberation Sans',sans-serif;transform:scaleX(1.1308);">lenny\</span><span id="t82" class="t" style="left:790.20px;top:362.77px;font-size:11.5px;color:#000;font-weight:normal;font-family:'Liberation Sans',sans-serif;transform:scaleX(1.0559);">recovery.img</span>
<div class="row" style="top:380px"><i style="left:26px"></i><i style="left:96px"></i><i style="left:210px"></i><i style="left:326px"></i></div>
<div class="cb" style="left:245px;top:385px"></div><svg class="a" style="left:245px;top:385px" width="13" height="13" viewBox="0 0 13 13"><path d="M3.300 6.600 L5.700 9.800 Q7.600 5.200 10.300 2.300" fill="none" stroke="#2f3a5e" stroke-width="1.900" stroke-linejoin="miter"/></svg>
<span id="t83" class="t" style="left:271.80px;top:385.77px;font-size:11.5px;color:#000;font-weight:normal;font-family:'Liberation Sans',sans-serif;transform:scaleX(0.8838);">SEC_RO</span>
<span id="t84" class="t" style="left:341.20px;top:385.77px;font-size:11.5px;color:#000;font-weight:normal;font-family:'Liberation Sans',sans-serif;transform:scaleX(0.9460);">0x0000000003580000</span>
<span id="t85" class="t" style="left:459.30px;top:385.77px;font-size:11.5px;color:#000;font-weight:normal;font-family:'Liberation Sans',sans-serif;transform:scaleX(0.9773);">0x00000000035a0fff</span>
<span id="t86" class="t" style="left:571.70px;top:385.77px;font-size:11.5px;color:#000;font-weight:normal;font-family:'Liberation Sans',sans-serif;transform:scaleX(1.0263);">C:\Users\Cell </span><span id="t87" class="t" style="left:644.50px;top:385.77px;font-size:11.5px;color:#000;font-weight:normal;font-family:'Liberation Sans',sans-serif;transform:scaleX(1.0788);">micro\Desktop\wiko </span><span id="t88" class="t" style="left:755.50px;top:385.77px;font-size:11.5px;color:#000;font-weight:normal;font-family:'Liberation Sans',sans-serif;transform:scaleX(1.1308);">lenny\</span><span id="t89" class="t" style="left:790.20px;top:385.77px;font-size:11.5px;color:#000;font-weight:normal;font-family:'Liberation Sans',sans-serif;transform:scaleX(1.0510);">secro.img</span>
<div class="row g" style="top:403px"><i style="left:26px"></i><i style="left:96px"></i><i style="left:210px"></i><i style="left:326px"></i></div>
<div class="cb g" style="left:245px;top:408px"></div><svg class="a" style="left:245px;top:408px" width="13" height="13" viewBox="0 0 13 13"><path d="M3.300 6.600 L5.700 9.800 Q7.600 5.200 10.300 2.300" fill="none" stroke="#2f3a5e" stroke-width="1.900" stroke-linejoin="miter"/></svg>
<span id="t90" class="t" style="left:271.80px;top:408.77px;font-size:11.5px;color:#000;font-weight:normal;font-family:'Liberation Sans',sans-serif;transform:scaleX(0.9478);">LOGO</span>
<span id="t91" class="t" style="left:341.20px;top:408.77px;font-size:11.5px;color:#000;font-weight:normal;font-family:'Liberation Sans',sans-serif;transform:scaleX(0.9460);">0x0000000003640000</span>
<span id="t92" class="t" style="left:457.00px;top:408.77px;font-size:11.5px;color:#000;font-weight:normal;font-family:'Liberation Sans',sans-serif;transform:scaleX(0.9561);">0x000000000367e5ef</span>
<span id="t93" class="t" style="left:571.70px;top:408.77px;font-size:11.5px;color:#000;font-weight:normal;font-family:'Liberation Sans',sans-serif;transform:scaleX(1.0263);">C:\Users\Cell </span><span id="t94" class="t" style="left:644.50px;top:408.77px;font-size:11.5px;color:#000;font-weight:normal;font-family:'Liberation Sans',sans-serif;transform:scaleX(1.0788);">micro\Desktop\wiko </span><span id="t95" class="t" style="left:755.50px;top:408.77px;font-size:11.5px;color:#000;font-weight:normal;font-family:'Liberation Sans',sans-serif;transform:scaleX(1.1308);">lenny\</span><span id="t96" class="t" style="left:790.20px;top:408.77px;font-size:11.5px;color:#000;font-weight:normal;font-family:'Liberation Sans',sans-serif;transform:scaleX(1.0944);">logo.bin</span>
<div class="row" style="top:426px"><i style="left:26px"></i><i style="left:96px"></i><i style="left:210px"></i><i style="left:326px"></i></div>
<div class="cb" style="left:245px;top:431px"></div><svg class="a" style="left:245px;top:431px" width="13" height="13" viewBox="0 0 13 13"><path d="M3.300 6.600 L5.700 9.800 Q7.600 5.200 10.300 2.300" fill="none" stroke="#2f3a5e" stroke-width="1.900" stroke-linejoin="miter"/></svg>
<span id="t97" class="t" style="left:271.80px;top:431.77px;font-size:11.5px;color:#000;font-weight:normal;font-family:'Liberation Sans',sans-serif;transform:scaleX(0.9881);">ANDROID</span>
<span id="t98" class="t" style="left:341.20px;top:431.77px;font-size:11.5px;color:#000;font-weight:normal;font-family:'Liberation Sans',sans-serif;transform:scaleX(0.9460);">0x0000000004340000</span>
<span id="t99" class="t" style="left:456.20px;top:431.77px;font-size:11.5px;color:#000;font-weight:normal;font-family:'Liberation Sans',sans-serif;transform:scaleX(0.9633);">0x000000003019ba7f</span>
<span id="t100" class="t" style="left:571.70px;top:431.77px;font-size:11.5px;color:#000;font-weight:normal;font-family:'Liberation Sans',sans-serif;transform:scaleX(1.0263);">C:\Users\Cell </span><span id="t101" class="t" style="left:644.50px;top:431.77px;font-size:11.5px;color:#000;font-weight:normal;font-family:'Liberation Sans',sans-serif;transform:scaleX(1.0788);">micro\Desktop\wiko </span><span id="t102" class="t" style="left:755.50px;top:431.77px;font-size:11.5px;color:#000;font-weight:normal;font-family:'Liberation Sans',sans-serif;transform:scaleX(1.1308);">lenny\</span><span id="t103" class="t" style="left:790.20px;top:431.77px;font-size:11.5px;color:#000;font-weight:normal;font-family:'Liberation Sans',sans-serif;transform:scaleX(1.0420);">system.img</span>
<div class="row g" style="top:449px"><i style="left:26px"></i><i style="left:96px"></i><i style="left:210px"></i><i style="left:326px"></i></div>
<div class="cb g" style="left:245px;top:454px"></div><svg class="a" style="left:245px;top:454px" width="13" height="13" viewBox="0 0 13 13"><path d="M3.300 6.600 L5.700 9.800 Q7.600 5.200 10.300 2.300" fill="none" stroke="#2f3a5e" stroke-width="1.900" stroke-linejoin="miter"/></svg>
<span id="t104" class="t" style="left:271.80px;top:454.77px;font-size:11.5px;color:#000;font-weight:normal;font-family:'Liberation Sans',sans-serif;transform:scaleX(0.9835);">CACHE</span>
<span id="t105" class="t" style="left:341.20px;top:454.77px;font-size:11.5px;color:#000;font-weight:normal;font-family:'Liberation Sans',sans-serif;transform:scaleX(0.9460);">0x0000000036340000</span>
<span id="t106" class="t" style="left:457.00px;top:454.77px;font-size:11.5px;color:#000;font-weight:normal;font-family:'Liberation Sans',sans-serif;transform:scaleX(0.9617);">0x000000003691e0cf</span>
<span id="t107" class="t" style="left:571.70px;top:454.77px;font-size:11.5px;color:#000;font-weight:normal;font-family:'Liberation Sans',sans-serif;transform:scaleX(1.0263);">C:\Users\Cell </span><span id="t108" class="t" style="left:644.50px;top:454.77px;font-size:11.5px;color:#000;font-weight:normal;font-family:'Liberation Sans',sans-serif;transform:scaleX(1.0788);">micro\Desktop\wiko </span><span id="t109" class="t" style="left:755.50px;top:454.77px;font-size:11.5px;color:#000;font-weight:normal;font-family:'Liberation Sans',sans-serif;transform:scaleX(1.1308);">lenny\</span><span id="t110" class="t" style="left:790.20px;top:454.77px;font-size:11.5px;color:#000;font-weight:normal;font-family:'Liberation Sans',sans-serif;transform:scaleX(1.0473);">cache.img</span>
<div class="row l" style="top:472px"><i style="left:26px"></i><i style="left:96px"></i><i style="left:210px"></i><i style="left:326px"></i></div>
<div class="cb l" style="left:245px;top:477px"></div><svg class="a" style="left:245px;top:477px" width="13" height="13" viewBox="0 0 13 13"><path d="M3.300 6.600 L5.700 9.800 Q7.600 5.200 10.300 2.300" fill="none" stroke="#2f3a5e" stroke-width="1.900" stroke-linejoin="miter"/></svg>
<span id="t111" class="t" style="left:271.80px;top:477.77px;font-size:11.5px;color:#000;font-weight:normal;font-family:'Liberation Sans',sans-serif;transform:scaleX(0.9427);">USRDATA</span>
<span id="t112" class="t" style="left:341.20px;top:477.77px;font-size:11.5px;color:#000;font-weight:normal;font-family:'Liberation Sans',sans-serif;transform:scaleX(0.9460);">0x0000000044540000</span>
<span id="t113" class="t" style="left:454.90px;top:477.77px;font-size:11.5px;color:#000;font-weight:normal;font-family:'Liberation Sans',sans-serif;transform:scaleX(0.9689);">0x0000000045c4d25b</span>
<span id="t114" class="t" style="left:571.70px;top:477.77px;font-size:11.5px;color:#000;font-weight:normal;font-family:'Liberation Sans',sans-serif;transform:scaleX(1.0263);">C:\Users\Cell </span><span id="t115" class="t" style="left:644.50px;top:477.77px;font-size:11.5px;color:#000;font-weight:normal;font-family:'Liberation Sans',sans-serif;transform:scaleX(1.0788);">micro\Desktop\wiko </span><span id="t116" class="t" style="left:755.50px;top:477.77px;font-size:11.5px;color:#000;font-weight:normal;font-family:'Liberation Sans',sans-serif;transform:scaleX(1.1308);">lenny\</span><span id="t117" class="t" style="left:790.20px;top:477.77px;font-size:11.5px;color:#000;font-weight:normal;font-family:'Liberation Sans',sans-serif;transform:scaleX(1.0318);">userdata.img</span>
<div class="a" style="left:222px;top:541px;width:796px;height:4px;background:#f8f828;border-top:1px solid #a8a83c;border-left:1px solid #b8b838"></div>
<div class="a" style="left:395px;top:180px;width:245px;height:185px;border:1px solid #474747;border-radius:7px;overflow:hidden;box-shadow:0 1px 7px 1px rgba(0,0,0,.38)">
<div class="a" style="left:0;top:0;width:243px;height:29px;background:linear-gradient(90deg,#eef3f8 0,#fcfdfe 5px,#fcfdfe 238px,#eef3f8 243px)"></div>
<div class="a" style="left:0;top:29px;width:7px;height:154px;background:linear-gradient(90deg,rgba(215,226,236,.95) 0,rgba(200,212,224,.7) 1.500px,rgba(105,120,135,.45) 3.300px,rgba(235,245,250,.75) 5px,rgba(255,255,255,.95) 6.200px,rgba(255,255,255,.9) 7px),linear-gradient(#ffffff 0px,#ffffff 6px,#cfcdf7 11px,#cfcdf7 30px,#ffffff 34px,#ffffff 53px,#57a87e 57px,#57a87e 76px,#ffffff 80px,#ffffff 99px,#57a87e 103px,#57a87e 122px,#ffffff 126px,#ffffff 145px,#57a87e 149px,#57a87e 154px)"></div>
<div class="a" style="left:236px;top:29px;width:7px;height:154px;background:linear-gradient(90deg,rgba(255,255,255,.9) 0,rgba(255,255,255,.95) .8px,rgba(235,245,250,.75) 2px,rgba(105,120,135,.45) 3.700px,rgba(200,212,224,.7) 5.500px,rgba(215,226,236,.95) 7px),linear-gradient(#ffffff 0px,#ffffff 6px,#cfcdf7 11px,#cfcdf7 30px,#ffffff 34px,#ffffff 53px,#57a87e 57px,#57a87e 76px,#ffffff 80px,#ffffff 99px,#57a87e 103px,#57a87e 122px,#ffffff 126px,#ffffff 145px,#57a87e 149px,#57a87e 154px)"></div>
<div class="a" style="left:0;top:177px;width:243px;height:6px;background:linear-gradient(rgba(255,255,255,.9) 0,rgba(200,225,230,.75) 2px,rgba(150,185,195,.7) 4px,rgba(225,240,245,.9) 6px),#8fb8a4"></div>
<div class="a" style="left:6px;top:28px;width:231px;height:150px;background:#57fefe;border:1px solid #3f8f98;border-top-color:#3a8088"></div>
<div class="a" style="left:190px;top:-1px;width:47px;height:20px;border:1px solid #8c8c8c;border-top:none;border-radius:0 0 4px 4px;background:linear-gradient(#ffffff,#fbfbfb 45%,#f3f3f3 50%,#f8f8f8)"></div>
<svg class="a" style="left:207px;top:3px" width="14" height="12" viewBox="0 0 14 12"><path d="M1.300 1.200 H5 L7 3.500 L9 1.200 H12.700 L9.200 5.900 L12.700 10.600 H9 L7 8.300 L5 10.600 H1.300 L4.800 5.900Z" fill="#fbfbfb" stroke="#3e3e3e" stroke-width="1.100" stroke-linejoin="round"/></svg>
<svg class="a" style="left:10px;top:7px" width="10.400" height="13" viewBox="0 0 10.400 13"><rect x=".3" y=".3" width="9.800" height="12.400" rx=".8" fill="#88c42c" stroke="#7a9a48" stroke-width=".6"/><rect x=".8" y=".8" width="8.800" height="2" fill="#e4f2c4"/><path d="M1 2.600 L5.200 6.400 L9.400 2.600 M1 9.400 L5.200 6.400 L9.400 9.400" fill="none" stroke="#c6e68e" stroke-width=".9"/><rect x=".6" y="10" width="9.200" height="2.600" fill="#3c6212"/></svg>
<svg class="a" style="left:62px;top:45px" width="118" height="118" viewBox="0 0 118 118"><defs><linearGradient id="gc" x1="0" y1="0" x2="0" y2="1"><stop offset="0" stop-color="#b6e436"/><stop offset=".18" stop-color="#a4d81c"/><stop offset=".55" stop-color="#93ca10"/><stop offset="1" stop-color="#7db80c"/></linearGradient></defs><circle cx="59" cy="59" r="58" fill="url(#gc)" stroke="#86bc14" stroke-width="1"/><path d="M23 66.500 L41.500 54.200 L51.200 72.600 Q62.500 42 91.200 22.800 Q88 30 89.600 36 Q89.400 43 91.800 48.400 Q72 61 52.200 91.800 Z" fill="#fff" stroke="#8ab820" stroke-width=".6"/></svg>
</div>
<span id="t118" class="t" style="left:423.70px;top:188.64px;font-size:12px;color:#000;font-weight:normal;font-family:'Liberation Sans',sans-serif;transform:scaleX(1.0285);">Download Ok</span>
</body></html>
